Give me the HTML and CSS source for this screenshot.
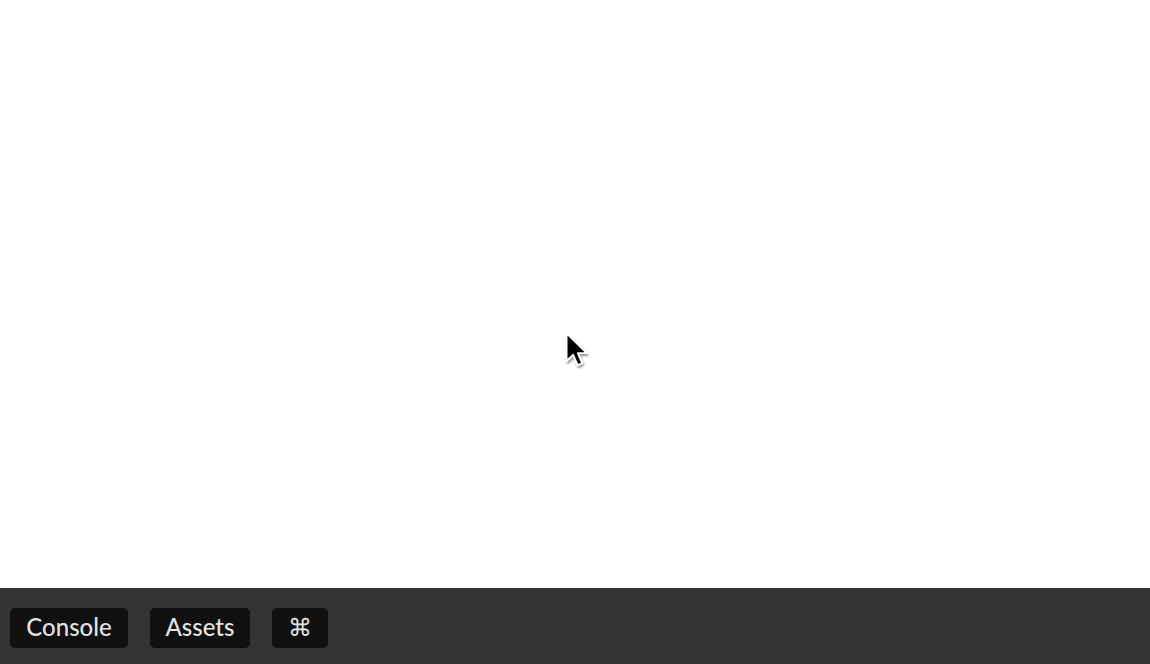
FILE: index.html
```html
<!DOCTYPE html>
<html>
<head>
<meta charset="utf-8">
<link rel="stylesheet" href="styles.css">
</head>
<body>
<div class="app">
  <main class="canvas"></main>
  <footer class="toolbar">
    <button class="tool-btn">Console</button>
    <button class="tool-btn">Assets</button>
    <button class="tool-btn">⌘</button>
  </footer>
</div>
<svg class="cursor" width="30" height="42" viewBox="0 0 25 35">
  <defs>
    <filter id="sh" x="-50%" y="-50%" width="200%" height="200%">
      <feGaussianBlur in="SourceAlpha" stdDeviation="1"/>
      <feOffset dx="1" dy="1.5"/>
      <feComponentTransfer><feFuncA type="linear" slope="0.45"/></feComponentTransfer>
      <feMerge><feMergeNode/><feMergeNode in="SourceGraphic"/></feMerge>
    </filter>
  </defs>
  <path filter="url(#sh)" d="M3 2 L3 25 L8.5 19.8 L12.2 28.5 L16 26.9 L12.4 18.4 L19.8 18.4 Z" fill="#000" stroke="#fff" stroke-width="1.5" stroke-linejoin="round"/>
</svg>
</body>
</html>
```

FILE: styles.css
```css
html, body {
  margin: 0;
  padding: 0;
  background: #fff;
}
.app {
  width: 1150px;
  height: 664px;
  display: flex;
  flex-direction: column;
}
.canvas {
  flex: 1;
  background: #fff;
}
.toolbar {
  height: 76px;
  background: #333335;
  display: flex;
  align-items: flex-start;
  gap: 22px;
  padding: 20px 10px 0;
  box-sizing: border-box;
}
.tool-btn {
  height: 40px;
  padding: 0 0 2px;
  border: none;
  border-radius: 5px;
  background: #111112;
  color: #e2e2e2;
  font-family: Lato, "Liberation Sans", sans-serif;
  font-size: 24px;
  font-weight: 500;
  line-height: 38px;
  text-align: center;
  box-sizing: border-box;
  cursor: default;
}
.tool-btn:nth-child(1) { width: 118px; }
.tool-btn:nth-child(2) { width: 100px; }
.tool-btn:nth-child(3) { width: 56px; }
.cursor {
  position: absolute;
  left: 563px;
  top: 331px;
  pointer-events: none;
}
```
